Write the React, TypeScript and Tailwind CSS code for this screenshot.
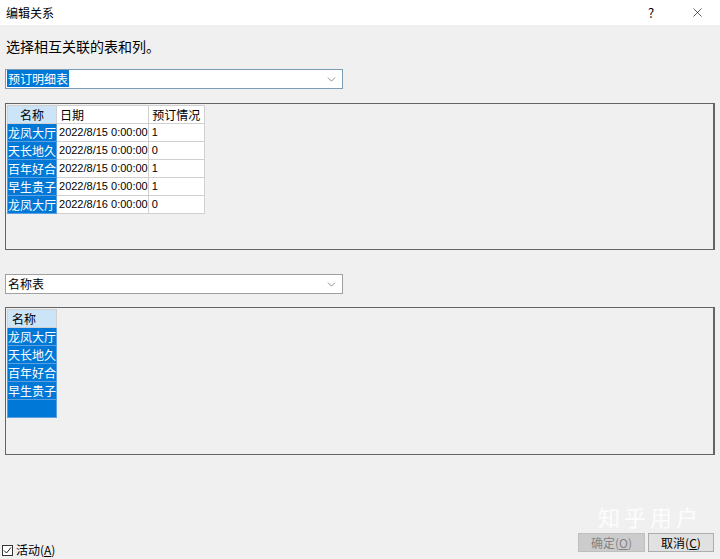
import { ChevronDown, X } from 'lucide-react'

const rows = [
  { name: '龙凤大厅', date: '2022/8/15 0:00:00', v: '1' },
  { name: '天长地久', date: '2022/8/15 0:00:00', v: '0' },
  { name: '百年好合', date: '2022/8/15 0:00:00', v: '1' },
  { name: '早生贵子', date: '2022/8/15 0:00:00', v: '1' },
  { name: '龙凤大厅', date: '2022/8/16 0:00:00', v: '0' },
]

const names = ['龙凤大厅', '天长地久', '百年好合', '早生贵子']

function Combo({ label, focused }: { label: string; focused?: boolean }) {
  return (
    <div
      className={`flex items-center h-[20px] w-[338px] bg-white border ${
        focused ? 'border-[#7a9cb4]' : 'border-[#a0a0a0]'
      }`}
    >
      <div className="flex-1 pl-[1px]">
        <span className={focused ? 'bg-[#0078d7] text-white px-[1px]' : 'px-[1px]'}>{label}</span>
      </div>
      <ChevronDown size={13} strokeWidth={1.2} className="mr-[4px] text-[#555]" />
    </div>
  )
}

export default function App() {
  return (
    <div
      className="w-[720px] h-[559px] bg-[#f0f0f0] flex flex-col text-[12px] text-black overflow-hidden"
      style={{ fontFamily: '"Noto Sans CJK SC", "Liberation Sans", sans-serif' }}
    >
      <div className="h-[25px] bg-white flex items-center justify-between pl-[6px] shrink-0">
        <span className="text-[12px]">编辑关系</span>
        <div className="flex items-center h-full">
          <span className="w-[46px] text-center text-[13px]">?</span>
          <div className="w-[46px] flex justify-center">
            <X size={15} strokeWidth={1} />
          </div>
        </div>
      </div>

      <div className="flex-1 flex flex-col px-[5px]">
        <div className="mt-[11px] text-[14px] leading-[20px] pl-[1px]">选择相互关联的表和列。</div>

        <div className="mt-[13px]">
          <Combo label="预订明细表" focused />
        </div>

        <div className="mt-[14px] h-[147px] border border-[#646464] border-r-[2px] bg-[#f0f0f0] p-[1px]">
          <table className="border-collapse leading-[17px]">
            <thead>
              <tr className="h-[17px]">
                <th className="w-[49px] bg-[#cce4f7] font-normal text-center px-[2px] border border-[#d0d0d0]">名称</th>
                <th className="w-[90px] bg-white font-normal text-left pl-[3px] border border-[#d0d0d0]">日期</th>
                <th className="w-[56px] bg-white font-normal text-center border border-[#d0d0d0]">预订情况</th>
              </tr>
            </thead>
            <tbody>
              {rows.map((r, i) => (
                <tr key={i} className="h-[18px]">
                  <td className="bg-[#0078d7] text-white px-0 border border-[#5a9fe0] whitespace-nowrap">{r.name}</td>
                  <td
                    className="bg-white pl-[2px] pr-0 border border-[#d0d0d0] whitespace-nowrap"
                    style={{ fontFamily: '"Liberation Sans", sans-serif', fontSize: 11 }}
                  >
                    {r.date}
                  </td>
                  <td
                    className="bg-white pl-[3px] border border-[#d0d0d0]"
                    style={{ fontFamily: '"Liberation Sans", sans-serif', fontSize: 11 }}
                  >
                    {r.v}
                  </td>
                </tr>
              ))}
            </tbody>
          </table>
        </div>

        <div className="mt-[24px]">
          <Combo label="名称表" />
        </div>

        <div className="mt-[13px] h-[148px] border border-[#646464] border-r-[2px] bg-[#f0f0f0] p-[1px]">
          <table className="border-collapse leading-[17px]">
            <thead>
              <tr className="h-[17px]">
                <th className="w-[49px] bg-[#cce4f7] font-normal text-left pl-[4px] border border-[#d0d0d0]">名称</th>
              </tr>
            </thead>
            <tbody>
              {names.map((n, i) => (
                <tr key={i} className="h-[18px]">
                  <td className="bg-[#0078d7] text-white px-0 border border-[#5a9fe0] whitespace-nowrap">{n}</td>
                </tr>
              ))}
              <tr className="h-[18px]">
                <td className="bg-[#0078d7] border border-[#5a9fe0]"></td>
              </tr>
            </tbody>
          </table>
        </div>

        <div className="flex-1" />
      </div>

      <div className="relative h-[30px] shrink-0 flex items-start">
        <div className="flex items-center gap-[3px] pl-[2px] mt-[12px]">
          <div className="w-[11px] h-[11px] border border-[#333] bg-white flex items-center justify-center">
            <svg width="9" height="9" viewBox="0 0 9 9">
              <path d="M1 4.5 L3.5 7 L8 1.5" fill="none" stroke="#222" strokeWidth="1" />
            </svg>
          </div>
          <span className="text-[12px]">活动(<span className="underline">A</span>)</span>
        </div>
        <div className="flex-1" />
        <div className="flex gap-[3px] mr-[6px] mt-[4px]">
          <div className="w-[67px] h-[19px] bg-[#cccccc] border border-[#bfbfbf] text-[#838383] flex items-center justify-center">
            确定(<span className="underline">O</span>)
          </div>
          <div className="w-[66px] h-[19px] bg-[#e1e1e1] border border-[#adadad] flex items-center justify-center">
            取消(<span className="underline">C</span>)
          </div>
        </div>
        <div className="absolute right-[18px] top-[-25px] text-[22px] leading-[24px] text-white/80 tracking-[4px] pointer-events-none">
          知乎用户
        </div>
      </div>
    </div>
  )
}
